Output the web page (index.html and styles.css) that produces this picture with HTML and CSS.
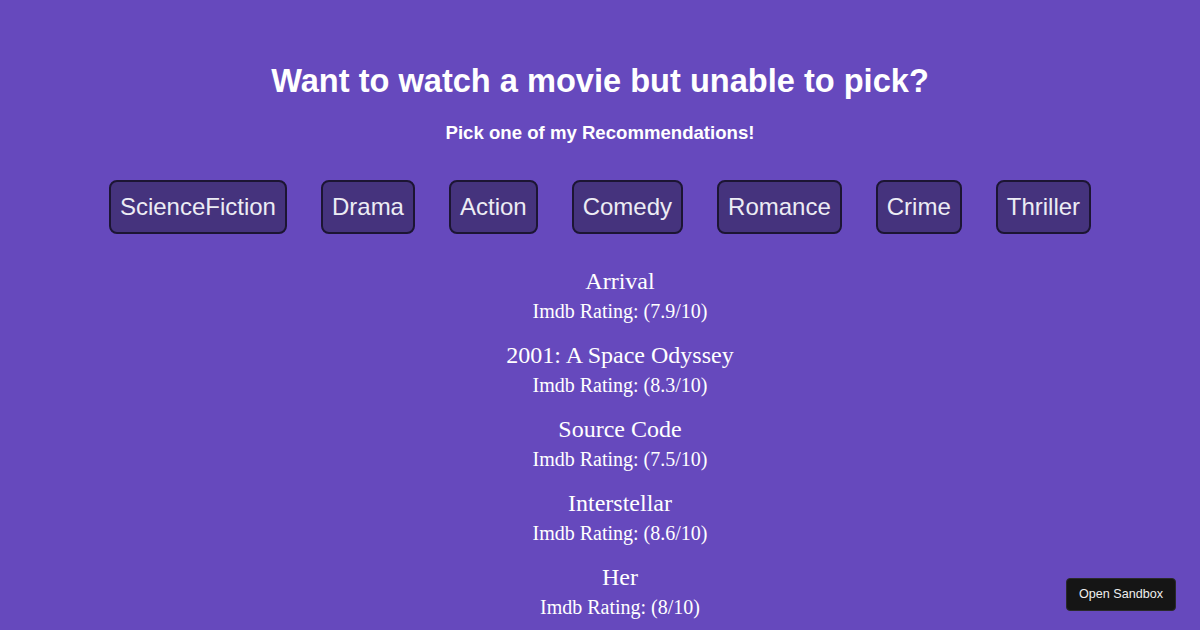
FILE: index.html
```html
<!DOCTYPE html>
<html lang="en">
<head>
  <meta charset="UTF-8" />
  <meta name="viewport" content="width=device-width, initial-scale=1.0" />
  <title>Movie Recommendations</title>
  <link rel="stylesheet" href="styles.css">
</head>
<body>
  <div class="app">
    <h1>Want to watch a movie but unable to pick?</h1>
    <p class="sub">Pick one of my Recommendations!</p>

    <div class="genres">
      <button>ScienceFiction</button>
      <button>Drama</button>
      <button>Action</button>
      <button>Comedy</button>
      <button>Romance</button>
      <button>Crime</button>
      <button>Thriller</button>
    </div>

    <ul class="movies">
      <li>
        <div class="name">Arrival</div>
        <div class="rating">Imdb Rating: (7.9/10)</div>
      </li>
      <li>
        <div class="name">2001: A Space Odyssey</div>
        <div class="rating">Imdb Rating: (8.3/10)</div>
      </li>
      <li>
        <div class="name">Source Code</div>
        <div class="rating">Imdb Rating: (7.5/10)</div>
      </li>
      <li>
        <div class="name">Interstellar</div>
        <div class="rating">Imdb Rating: (8.6/10)</div>
      </li>
      <li>
        <div class="name">Her</div>
        <div class="rating">Imdb Rating: (8/10)</div>
      </li>
    </ul>
  </div>

  <a class="sandbox" href="#">Open Sandbox</a>
</body>
</html>
```

FILE: styles.css
```css
body {
  margin: 0;
  background: #6649bd;
  color: #fff;
  font-family: "Liberation Sans", Arial, sans-serif;
  overflow: hidden;
}
.app {
  padding-top: 62px;
  text-align: center;
}
h1 {
  margin: 0;
  font-size: 32.6px;
  line-height: 37px;
}
.sub {
  margin: 23px 0 0;
  font-size: 18.6px;
  line-height: 21px;
  font-weight: bold;
}
.genres {
  display: flex;
  justify-content: center;
  gap: 34px;
  margin-top: 37px;
}
.genres button {
  font-family: "Liberation Sans", Arial, sans-serif;
  font-size: 24px;
  line-height: 28px;
  padding: 11px 9px;
  color: #ececf4;
  background: #45337d;
  border: 2px solid #1c1533;
  border-radius: 8px;
  cursor: pointer;
}
.movies {
  list-style: none;
  margin: 33px 0 0;
  padding: 0 0 0 40px;
  font-family: "Liberation Serif", "Times New Roman", serif;
}
.movies li {
  margin-bottom: 18px;
}
.name {
  font-size: 24px;
  line-height: 28px;
}
.rating {
  margin-top: 5px;
  font-size: 20px;
  line-height: 23px;
}
.sandbox {
  position: fixed;
  right: 24px;
  bottom: 19px;
  padding: 8px 12px;
  background: #151515;
  color: #eee;
  font-family: "Liberation Sans", Arial, sans-serif;
  font-size: 12.6px;
  line-height: 15px;
  text-decoration: none;
  border: 1px solid #2a2a2a;
  border-radius: 4px;
}
```
